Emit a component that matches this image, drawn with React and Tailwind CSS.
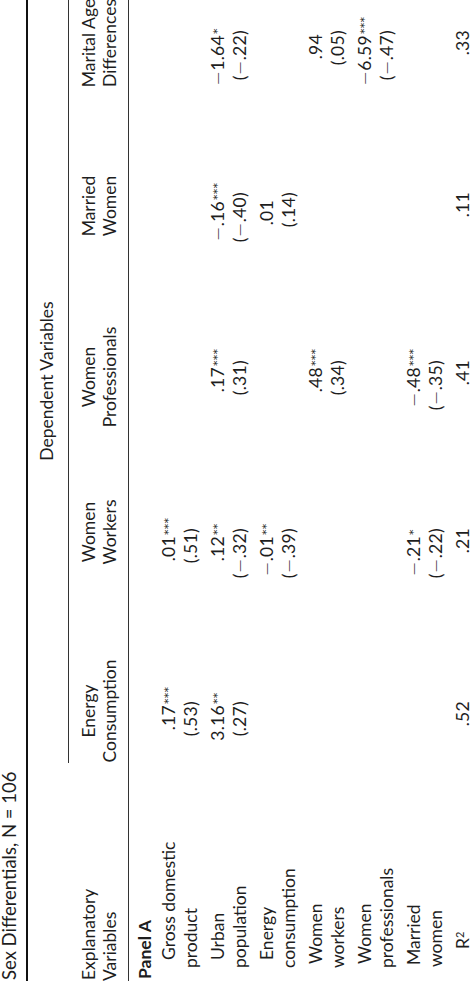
const COLS = [
  { header: ["Energy", "Consumption"], center: 270, rp: 280, rc: 277 },
  { header: ["Women", "Workers"], center: 449, rp: 453, rc: 446 },
  { header: ["Women", "Professionals"], center: 604, rp: 621, rc: 615 },
  { header: ["Married", "Women"], center: 775, rp: 789, rc: 781 },
  { header: ["Marital Age", "Differences"], center: 938, rp: 951, rc: 947 },
];

// each body line: label, indent, gap above, and cell per column
// cell: [value, stars] for coefficients or "(x)" strings for standard errors
const LINES = [
  { label: "Gross domestic", indent: 21, gap: 2, cells: [[".17", "***"], [".01", "***"], null, null, null] },
  { label: "product", indent: 13, gap: 0, cells: ["(.53)", "(.51)", null, null, null] },
  { label: "Urban", indent: 21, gap: 5, cells: [["3.16", "**"], [".12", "**"], [".17", "***"], ["−.16", "***"], ["−1.64", "*"]] },
  { label: "population", indent: 13, gap: 0, cells: ["(.27)", "(−.32)", "(.31)", "(−.40)", "(−.22)"] },
  { label: "Energy", indent: 21, gap: 5, cells: [null, ["−.01", "**"], null, [".01", ""], null] },
  { label: "consumption", indent: 13, gap: 0, cells: [null, "(−.39)", null, "(.14)", null] },
  { label: "Women", indent: 17, gap: 5, cells: [null, null, [".48", "***"], null, [".94", ""]] },
  { label: "workers", indent: 13, gap: 0, cells: [null, null, "(.34)", null, "(.05)"] },
  { label: "Women", indent: 17, gap: 5, cells: [null, null, null, null, ["−6.59", "***"]] },
  { label: "professionals", indent: 13, gap: 0, cells: [null, null, null, null, "(−.47)"] },
  { label: "Married", indent: 16, gap: 5, cells: [null, ["−.21", "*"], ["−.48", "***"], null, null] },
  { label: "women", indent: 14, gap: 0, cells: [null, "(−.22)", "(−.35)", null, null] },
];

const R2 = [".52", ".21", ".41", ".11", ".33"];

// wide minus like the printed table
function Num({ text }) {
  const parts = text.split("−");
  if (parts.length === 1) return text;
  return (
    <>
      {parts[0]}
      <span className="font-['DejaVu_Sans',sans-serif] font-light">−</span>
      {parts[1]}
    </>
  );
}

function Stars({ s }) {
  if (!s) return null;
  return (
    <span className="inline-block w-0 whitespace-nowrap pl-[1px] font-['DejaVu_Sans',sans-serif] text-[11px] leading-none align-[3px]">
      {s}
    </span>
  );
}

function Cell({ cell, col, prev }) {
  if (!cell) return <div style={{ width: col.rp - prev }} />;
  const coef = Array.isArray(cell);
  const right = coef ? col.rc : col.rp;
  return (
    <div className="flex justify-end whitespace-nowrap tracking-[0.3px]" style={{ width: right - prev, marginRight: col.rp - right }}>
      {coef ? (
        <span>
          <Num text={cell[0]} />
          <Stars s={cell[1]} />
        </span>
      ) : (
        <span>
          <Num text={cell} />
        </span>
      )}
    </div>
  );
}

function Row({ label, indent, cells, bold }) {
  let prev = 190;
  return (
    <div className="flex h-[22px] leading-[22px]">
      <div className={`w-[190px] shrink-0 whitespace-nowrap ${bold ? "font-bold" : ""}`} style={{ paddingLeft: indent }}>
        {label}
      </div>
      {cells &&
        cells.map((c, i) => {
          const el = <Cell key={i} cell={c} col={COLS[i]} prev={prev} />;
          prev = COLS[i].rp;
          return el;
        })}
    </div>
  );
}

export default function App() {
  return (
    <div className="h-[981px] w-[474px] overflow-hidden bg-white">
      <div className="h-[474px] w-[981px] origin-top-left -rotate-90 translate-y-[981px] font-['Lato',sans-serif] text-[17.5px] text-[#1e1e1e]">
        <div className="h-[26px] whitespace-nowrap pl-[1px] text-[18.5px] leading-[18px]">
          Sex Differentials, N = 106
        </div>
        <div className="h-[2px] bg-[#111]" />

        <div className="flex h-[100px]">
          <div className="flex w-[218px] shrink-0 flex-col justify-end pb-[8px] leading-[21px]">
            <div className="pl-[1px]">Explanatory</div>
            <div>Variables</div>
          </div>
          <div className="flex flex-1 flex-col">
            <div className="mt-[8px] h-[21px] leading-[21px]">
              <div className="w-[764px] text-center" style={{ marginLeft: 600 - 218 - 382 }}>
                Dependent Variables
              </div>
            </div>
            <div className="mt-[11px] h-px bg-[#333]" />
            <div className="mt-[9px] flex leading-[21px]">
              {COLS.map((c, i) => {
                const prevEdge = i === 0 ? 218 : COLS[i - 1].center + 75;
                return (
                  <div
                    key={i}
                    className="w-[150px] shrink-0 whitespace-nowrap text-center"
                    style={{ marginLeft: c.center - 75 - prevEdge }}
                  >
                    <div>{c.header[0]}</div>
                    <div>{c.header[1]}</div>
                  </div>
                );
              })}
            </div>
          </div>
        </div>
        <div className="h-px bg-[#333]" />

        <div className="flex flex-col pt-[5px]">
          <Row label="Panel A" indent={2} bold />
          {LINES.map((l, i) => (
            <div key={i} style={{ marginTop: l.gap }}>
              <Row label={l.label} indent={l.indent} cells={l.cells} />
            </div>
          ))}
          <div className="mt-[5px]">
            <Row
              label={
                <span>
                  R<sup className="text-[11px]">2</sup>
                </span>
              }
              indent={32}
              cells={R2}
            />
          </div>
        </div>
      </div>
    </div>
  );
}
